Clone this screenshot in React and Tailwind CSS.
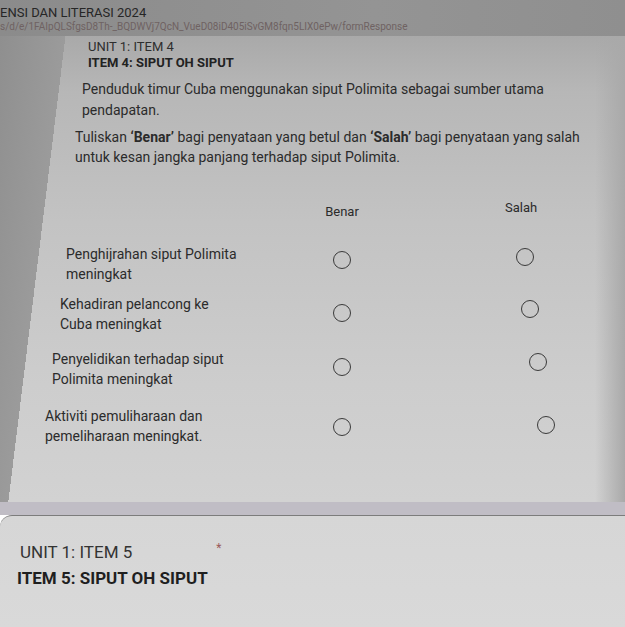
import React from "react";

function Radio({ className = "" }) {
  return (
    <div
      className={`w-[18px] h-[18px] rounded-full border-[1.6px] border-[#3a3a3a] ${className}`}
    />
  );
}

const rows = [
  { l1: "Penghijrahan siput Polimita", l2: "meningkat", pl: "pl-[66px]", mt: "mt-0", bm: "mt-[7px]", sm: "mt-[4px]", spl: "pl-[165px]" },
  { l1: "Kehadiran pelancong ke", l2: "Cuba meningkat", pl: "pl-[60px]", mt: "mt-[10px]", bm: "mt-[10px]", sm: "mt-[6px]", spl: "pl-[170px]" },
  { l1: "Penyelidikan terhadap siput", l2: "Polimita meningkat", pl: "pl-[52px]", mt: "mt-[15px]", bm: "mt-[9px]", sm: "mt-[4px]", spl: "pl-[178px]" },
  { l1: "Aktiviti pemuliharaan dan", l2: "pemeliharaan meningkat.", pl: "pl-[45px]", mt: "mt-[17px]", bm: "mt-[12px]", sm: "mt-[10px]", spl: "pl-[186px]" },
];

export default function App() {
  return (
    <div
      className="w-[625px] h-[627px] overflow-hidden flex flex-col text-[#2b2b2b]"
      style={{ fontFamily: "Roboto, 'Liberation Sans', sans-serif" }}
    >
      {/* top browser strip */}
      <div className="h-[36px] shrink-0 bg-[linear-gradient(90deg,#8b8b8b,#949494_60%,#8f8f8f)] pt-[5px]">
        <div className="text-[13px] leading-[16px] text-[#262626]">ENSI DAN LITERASI 2024</div>
        <div className="text-[10px] leading-[12px] text-[#6f6262] whitespace-nowrap">
          s/d/e/1FAIpQLSfgsD8Th-_BQDWVj7QcN_VueD08iD405iSvGM8fqn5LIX0ePw/formResponse
        </div>
      </div>

      {/* main card */}
      <div className="h-[466px] shrink-0 pt-[3px] bg-[linear-gradient(97deg,#8f8f8f_0,#9b9b9b_65px,transparent_65px),linear-gradient(270deg,#a9a9a9_0,transparent_30px),linear-gradient(180deg,#a9a9a9,#b7b7b7_12%,#c3c3c3_40%,#cdcdcd_75%,#d2d2d2)]">
        <div className="pl-[88px] text-[13px] leading-[16px] text-[#2e2e2e]">UNIT 1: ITEM 4</div>
        <div className="pl-[88px] text-[13px] leading-[16px] font-bold text-[#222]">ITEM 4: SIPUT OH SIPUT</div>

        <p className="pl-[82px] mt-[8px] text-[14px] leading-[21px]">
          Penduduk timur Cuba menggunakan siput Polimita sebagai sumber utama
          <br />
          pendapatan.
        </p>

        <p className="pl-[75px] mt-[6px] text-[14px] leading-[20px] whitespace-nowrap">
          Tuliskan <b>‘Benar’</b> bagi penyataan yang betul dan <b>‘Salah’</b> bagi penyataan yang salah
          <br />
          untuk kesan jangka panjang terhadap siput Polimita.
        </p>

        {/* grid header */}
        <div className="mt-[37px] grid grid-cols-[333px_18px_1fr] text-[13px] leading-[16px]">
          <div />
          <div className="flex justify-center whitespace-nowrap">Benar</div>
          <div className="pl-[154px] -mt-[4px]">Salah</div>
        </div>

        <div className="mt-[24px]">
          {rows.map((r, i) => (
            <div key={i} className={`grid grid-cols-[333px_18px_1fr] items-start ${r.mt}`}>
              <div className={`${r.pl} text-[14px] leading-[20px] whitespace-nowrap`}>
                {r.l1}
                <br />
                {r.l2}
              </div>
              <Radio className={r.bm} />
              <div className={r.spl}>
                <Radio className={r.sm} />
              </div>
            </div>
          ))}
        </div>
      </div>

      {/* separator band */}
      <div className="h-[13px] shrink-0 bg-[#c0bdc5]" />

      {/* next card */}
      <div className="flex-1 bg-[linear-gradient(180deg,#d6d6d6,#d9d9d9)] border-t border-[#7c7c7c] rounded-tl-[12px] pt-[26px]">
        <div className="flex items-start pl-[20px]">
          <span className="text-[17px] leading-[20px] text-[#333]">UNIT 1: ITEM 5</span>
          <span className="ml-[84px] -mt-[3px] text-[12px] text-[#9a5a5a]">*</span>
        </div>
        <div className="pl-[17px] mt-[5px] text-[17px] leading-[22px] font-bold text-[#1f1f1f]">
          ITEM 5: SIPUT OH SIPUT
        </div>
      </div>
    </div>
  );
}
